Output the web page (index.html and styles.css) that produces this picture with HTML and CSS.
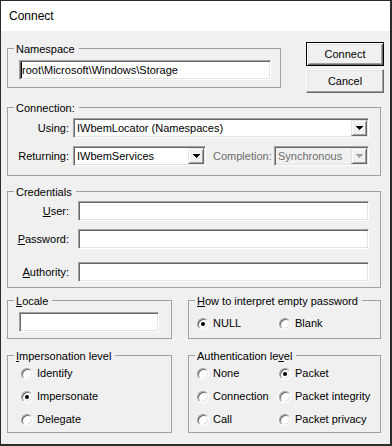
FILE: index.html
```html
<!DOCTYPE html>
<html>
<head>
<meta charset="utf-8">
<title>Connect</title>
<link rel="stylesheet" href="styles.css">
</head>
<body>
<div class="window">
  <div class="titlebar">Connect</div>
  <div class="content">
    <div class="row-top">
      <div class="group ns">
        <span class="legend">Namespace</span>
        <div class="edit ns-edit"><span class="caret"></span>root\Microsoft\Windows\Storage</div>
      </div>
      <div class="buttons">
        <div class="btn default">Connect</div>
        <div class="btn">Cancel</div>
      </div>
    </div>

    <div class="group conn">
      <span class="legend">Connection:</span>
      <div class="frow">
        <span class="lbl">Using:</span>
        <div class="combo using"><span class="val">IWbemLocator (Namespaces)</span><span class="drop"><svg width="7" height="4" viewBox="0 0 7 4"><path d="M0 0h7v1h-1v1h-1v1h-1v1h-1v-1h-1v-1h-1v-1h-1z" fill="#000"/></svg></span></div>
      </div>
      <div class="frow gap8">
        <span class="lbl">Returning:</span>
        <div class="combo returning"><span class="val">IWbemServices</span><span class="drop"><svg width="7" height="4" viewBox="0 0 7 4"><path d="M0 0h7v1h-1v1h-1v1h-1v1h-1v-1h-1v-1h-1v-1h-1z" fill="#000"/></svg></span></div>
        <span class="completion">Completion:</span>
        <div class="combo disabled"><span class="val">Synchronous</span><span class="drop"><svg width="7" height="4" viewBox="0 0 7 4"><path d="M0 0h7v1h-1v1h-1v1h-1v1h-1v-1h-1v-1h-1v-1h-1z" fill="#a0a0a0"/></svg></span></div>
      </div>
    </div>

    <div class="group cred">
      <span class="legend">Credentials</span>
      <div class="frow">
        <span class="lbl wide"><u>U</u>ser:</span>
        <div class="edit cred-edit"></div>
      </div>
      <div class="frow gap8">
        <span class="lbl wide"><u>P</u>assword:</span>
        <div class="edit cred-edit"></div>
      </div>
      <div class="frow gap13">
        <span class="lbl wide"><u>A</u>uthority:</span>
        <div class="edit cred-edit"></div>
      </div>
    </div>

    <div class="pair pair1">
      <div class="group locale">
        <span class="legend"><u>L</u>ocale</span>
        <div class="edit locale-edit"></div>
      </div>
      <div class="group howto">
        <span class="legend"><u>H</u>ow to interpret empty password</span>
        <div class="hradios">
          <div class="radio c1"><i class="on"></i>NULL</div>
          <div class="radio"><i></i>Blank</div>
        </div>
      </div>
    </div>

    <div class="pair pair2">
      <div class="group imp">
        <span class="legend"><u>I</u>mpersonation level</span>
        <div class="vradios">
          <div class="radio"><i></i>Identify</div>
          <div class="radio"><i class="on"></i>Impersonate</div>
          <div class="radio"><i></i>Delegate</div>
        </div>
      </div>
      <div class="group auth">
        <span class="legend">Authentication le<u>v</u>el</span>
        <div class="agrid">
          <div class="radio"><i></i>None</div>
          <div class="radio"><i class="on"></i>Packet</div>
          <div class="radio"><i></i>Connection</div>
          <div class="radio"><i></i>Packet integrity</div>
          <div class="radio"><i></i>Call</div>
          <div class="radio"><i></i>Packet privacy</div>
        </div>
      </div>
    </div>
  </div>
</div>
</body>
</html>
```

FILE: styles.css
```css
* { box-sizing: border-box; }
html, body { margin: 0; padding: 0; }
body {
  width: 392px;
  height: 446px;
  overflow: hidden;
  background: #f0f0f0;
  font-family: "Liberation Sans", Arial, sans-serif;
  font-size: 11px;
  color: #000;
}
u { text-decoration: underline; text-underline-offset: 1px; }

.window {
  width: 392px;
  height: 446px;
  border: 1px solid #2b2b2b;
  border-right-width: 2px;
  border-bottom-width: 2px;
  background: #f0f0f0;
}
.titlebar {
  height: 30px;
  line-height: 30px;
  background: #fff;
  padding-left: 8px;
  font-size: 12px;
}
.content { padding-left: 6px; }

/* group boxes */
.group {
  --pl: 0px;
  --pt: 10px;
  border: 1px solid #a0a0a0;
  padding-left: var(--pl);
  flex: none;
}
.legend {
  display: block;
  width: max-content;
  height: 13px;
  line-height: 13px;
  margin: -6px 0 calc(var(--pt) - 7px) calc(6px - var(--pl));
  padding: 0 4px 0 2px;
  background: #f0f0f0;
  white-space: nowrap;
}

/* sunken edit */
.edit {
  height: 20px;
  border: 1px solid;
  border-color: #a0a0a0 #fff #fff #a0a0a0;
  box-shadow: inset 1px 1px 0 #696969, inset -1px -1px 0 #e3e3e3;
  background: #fff;
  padding: 1px 2px 1px 1px;
  line-height: 16px;
  white-space: nowrap;
  overflow: hidden;
  display: flex;
  flex: none;
}
.caret { width: 1px; height: 16px; background: #000; flex: none; }

/* top row */
.row-top { display: flex; align-items: flex-start; }
.ns {
  --pl: 11px;
  --pt: 11px;
  width: 274px;
  margin-top: 17px;
  padding-right: 9px;
  padding-bottom: 7px;
}
.ns-edit { width: 252px; }

.buttons {
  width: 78px;
  margin-left: 25px;
  margin-top: 11px;
  display: flex;
  flex-direction: column;
  gap: 3px;
}
.btn {
  height: 24px;
  line-height: 22px;
  text-align: center;
  background: #f0f0f0;
  border: 1px solid;
  border-color: #fff #696969 #696969 #fff;
  box-shadow: inset -1px -1px 0 #a0a0a0, inset 1px 1px 0 #e3e3e3;
}
.btn.default {
  border-color: #000;
  box-shadow: inset 1px 1px 0 #fff, inset -1px -1px 0 #696969,
              inset 2px 2px 0 #e3e3e3, inset -2px -2px 0 #a0a0a0;
}

/* form rows */
.frow { display: flex; align-items: center; height: 20px; }
.frow.gap8 { margin-top: 8px; }
.frow.gap13 { margin-top: 13px; }
.lbl { width: 61px; text-align: right; flex: none; margin-right: 4px; white-space: nowrap; }
.lbl.wide { margin-right: 9px; }

.conn {
  --pt: 10px;
  width: 374px;
  margin-top: 14px;
  padding-right: 11px;
  padding-bottom: 9px;
}

/* combo box */
.combo {
  display: flex;
  height: 20px;
  flex: none;
  border: 1px solid;
  border-color: #a0a0a0 #fff #fff #a0a0a0;
  box-shadow: inset 1px 1px 0 #696969, inset -1px -1px 0 #e3e3e3;
  background: #fff;
  padding: 1px;
}
.combo .val {
  flex: 1;
  line-height: 16px;
  padding-left: 2px;
  white-space: nowrap;
  overflow: hidden;
}
.combo .drop {
  width: 16px;
  height: 16px;
  flex: none;
  background: #f0f0f0;
  border: 1px solid;
  border-color: #e3e3e3 #696969 #696969 #e3e3e3;
  box-shadow: inset 1px 1px 0 #fff, inset -1px -1px 0 #a0a0a0;
  display: flex;
  align-items: center;
  justify-content: center;
}
.combo .drop svg { display: block; }
.combo.using { width: 296px; }
.combo.returning { width: 133px; }
.completion { margin-left: 7px; color: #6d6d6d; white-space: nowrap; }
.combo.disabled { width: 95px; margin-left: auto; background: #f0f0f0; }
.combo.disabled .val { color: #6d6d6d; }

.cred {
  --pt: 9px;
  width: 374px;
  margin-top: 15px;
  padding-right: 11px;
  padding-bottom: 5px;
}
.cred-edit { width: 291px; }

/* bottom pairs */
.pair { display: flex; gap: 16px; }
.pair1 { margin-top: 12px; }
.pair2 { margin-top: 16px; }

.locale {
  --pl: 11px;
  --pt: 11px;
  width: 165px;
  padding-bottom: 6px;
}
.locale-edit { width: 140px; }

.howto {
  --pl: 8px;
  --pt: 16px;
  width: 193px;
}
.hradios { display: flex; }
.hradios .c1 { width: 82px; }

.imp {
  --pl: 13px;
  --pt: 11px;
  width: 165px;
  padding-bottom: 6px;
}
.vradios { display: flex; flex-direction: column; gap: 10px; }

.auth {
  --pl: 8px;
  --pt: 11px;
  width: 193px;
  padding-bottom: 6px;
}
.agrid {
  display: grid;
  grid-template-columns: 82px 1fr;
  row-gap: 10px;
}

/* radio buttons */
.radio {
  display: flex;
  align-items: center;
  height: 13px;
  line-height: 13px;
  white-space: nowrap;
}
.radio i {
  width: 12px;
  height: 12px;
  flex: none;
  margin-right: 4px;
  border-radius: 50%;
  background: #fff;
  border: 1px solid;
  border-color: #a0a0a0 #fff #fff #a0a0a0;
  box-shadow: inset 1px 1px 0 #696969, inset -1px -1px 0 #e3e3e3;
  display: flex;
  align-items: center;
  justify-content: center;
}
.radio i.on::after {
  content: "";
  width: 4px;
  height: 4px;
  border-radius: 50%;
  background: #000;
}
```
